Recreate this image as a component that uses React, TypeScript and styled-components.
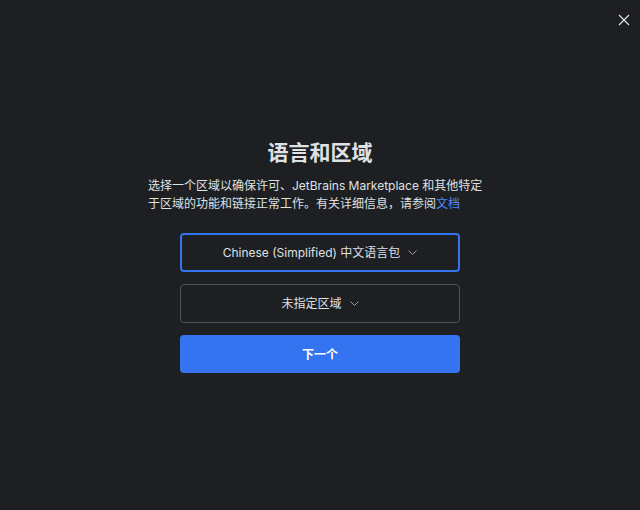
import React from "react";
import styled, { createGlobalStyle } from "styled-components";

const Global = createGlobalStyle`
  html, body { margin: 0; padding: 0; background: #1e1f22; }
  body { font-family: Inter, "Noto Sans CJK SC", sans-serif; }
  #root { width: 640px; height: 510px; }
`;

const Screen = styled.div`
  position: relative;
  width: 640px;
  height: 510px;
  background: #1e1f22;
  display: flex;
  flex-direction: column;
  align-items: center;
  justify-content: center;
  color: #dfe1e5;
  font-family: Inter, "Noto Sans CJK SC", sans-serif;
`;

const CloseButton = styled.button`
  position: absolute;
  top: 13px;
  right: 9px;
  width: 14px;
  height: 14px;
  padding: 0;
  border: none;
  background: transparent;
  display: flex;
  align-items: center;
  justify-content: center;
  cursor: pointer;
`;

const Content = styled.div`
  display: flex;
  flex-direction: column;
  align-items: center;
  padding-top: 2px;
`;

const Title = styled.h1`
  margin: 0;
  font-size: 21px;
  line-height: 26px;
  font-weight: 700;
  color: #dfe1e5;
  font-family: Inter, "Noto Sans CJK SC", sans-serif;
`;

const Description = styled.p`
  margin: 11px 0 0 0;
  width: 344px;
  font-size: 12px;
  line-height: 18px;
  text-align: left;
  color: #dfe1e5;
`;

const Link = styled.a`
  color: #548af7;
  text-decoration: none;
`;

const Form = styled.div`
  margin-top: 20px;
  width: 280px;
  display: flex;
  flex-direction: column;
  gap: 12px;
`;

const Select = styled.button<{ $focused?: boolean }>`
  box-sizing: border-box;
  height: 39px;
  width: 100%;
  border-radius: 4px;
  background: #1e1f22;
  border: ${(p) => (p.$focused ? "2px solid #3574f0" : "1px solid #4e5157")};
  color: #dfe1e5;
  font-family: Inter, "Noto Sans CJK SC", sans-serif;
  font-size: 12px;
  display: flex;
  align-items: center;
  justify-content: center;
  gap: 8px;
  padding: 0 0 1px 0;
  cursor: pointer;
`;

const Chevron = styled.svg`
  width: 9px;
  height: 5px;
  margin-top: 1px;
`;

const Primary = styled.button`
  height: 38px;
  width: 100%;
  border: none;
  border-radius: 4px;
  background: #3574f0;
  color: #ffffff;
  font-family: Inter, "Noto Sans CJK SC", sans-serif;
  font-size: 12px;
  font-weight: 600;
  cursor: pointer;
`;

const Arrow = () => (
  <Chevron viewBox="0 0 9 5" fill="none">
    <path d="M0.5 0.5L4.5 4.5L8.5 0.5" stroke="#9da0a8" strokeWidth="1" />
  </Chevron>
);

export default function App() {
  return (
    <>
      <Global />
      <Screen>
        <CloseButton aria-label="关闭">
          <svg width="12" height="12" viewBox="0 0 12 12" fill="none">
            <path d="M1 1L11 11M11 1L1 11" stroke="#dfe1e5" strokeWidth="1.2" />
          </svg>
        </CloseButton>
        <Content>
          <Title>语言和区域</Title>
          <Description>
            选择一个区域以确保许可、JetBrains Marketplace 和其他特定
            <br />
            于区域的功能和链接正常工作。有关详细信息，请参阅<Link href="#">文档</Link>
          </Description>
          <Form>
            <Select $focused>
              Chinese (Simplified) 中文语言包
              <Arrow />
            </Select>
            <Select>
              未指定区域
              <Arrow />
            </Select>
            <Primary>下一个</Primary>
          </Form>
        </Content>
      </Screen>
    </>
  );
}
